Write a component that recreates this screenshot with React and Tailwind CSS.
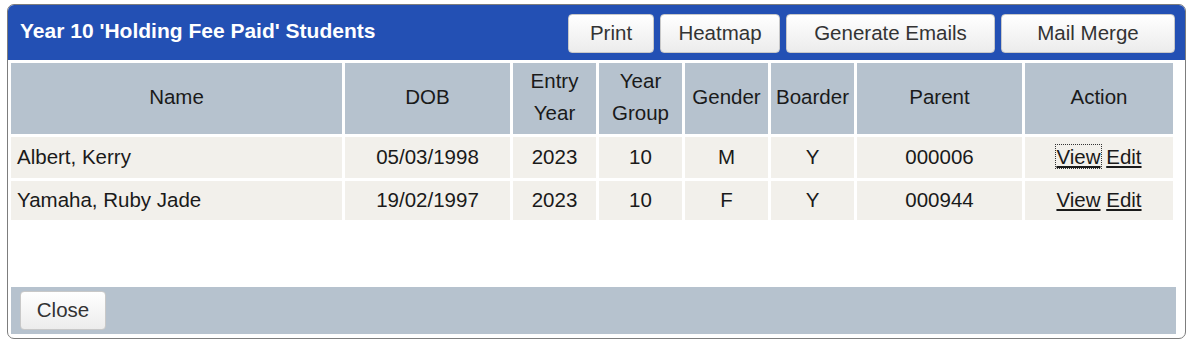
import React from 'react';

const students = [
  { name: 'Albert, Kerry', dob: '05/03/1998', entry: '2023', group: '10', gender: 'M', boarder: 'Y', parent: '000006', focus: true },
  { name: 'Yamaha, Ruby Jade', dob: '19/02/1997', entry: '2023', group: '10', gender: 'F', boarder: 'Y', parent: '000944' },
];

const btn =
  'h-[39px] rounded-[4px] border border-[#c8c8c8] bg-gradient-to-b from-white to-[#ececec] text-[20.5px] text-[#333] leading-none';

const App = () => {
  return (
    <div className="min-h-screen bg-white pt-[4px] pl-[7px] font-['Liberation_Sans',Arial,sans-serif]">
      <div className="w-[1179px] h-[335px] border border-[#7d7d7d] rounded-[7px] overflow-hidden bg-white flex flex-col">
        {/* Title bar */}
        <div className="h-[55px] bg-[#2350b4] flex items-center justify-between pl-[12px] pr-[10px] shrink-0">
          <h1 className="text-white font-bold text-[21px] -mt-[4px]">Year 10 'Holding Fee Paid' Students</h1>
          <div className="flex gap-[6px] mt-[2px]">
            <button className={`${btn} w-[86px]`}>Print</button>
            <button className={`${btn} w-[120px]`}>Heatmap</button>
            <button className={`${btn} w-[209px]`}>Generate Emails</button>
            <button className={`${btn} w-[174px]`}>Mail Merge</button>
          </div>
        </div>

        {/* Table */}
        <div className="grow">
          <table className="border-separate border-spacing-[3px] text-[20.5px] text-[#1a1a1a]">
            <thead>
              <tr className="bg-[#b6c2ce] h-[71px] leading-[32px]">
                <th className="font-normal pb-[3px] w-[331px]">Name</th>
                <th className="font-normal pb-[3px] w-[165px]">DOB</th>
                <th className="font-normal pb-[3px] w-[83px]">Entry<br />Year</th>
                <th className="font-normal pb-[3px] w-[83px]">Year<br />Group</th>
                <th className="font-normal pb-[3px] w-[83px]">Gender</th>
                <th className="font-normal pb-[3px] w-[83px]">Boarder</th>
                <th className="font-normal pb-[3px] w-[165px]">Parent</th>
                <th className="font-normal pb-[3px] w-[148px]">Action</th>
              </tr>
            </thead>
            <tbody>
              {students.map((s, i) => (
                <tr key={s.name} className={`bg-[#f2f0eb] ${i === 0 ? 'h-[41px]' : 'h-[39px]'}`}>
                  <td className="pl-[6px]">{s.name}</td>
                  <td className="text-center">{s.dob}</td>
                  <td className="text-center">{s.entry}</td>
                  <td className="text-center">{s.group}</td>
                  <td className="text-center">{s.gender}</td>
                  <td className="text-center">{s.boarder}</td>
                  <td className="text-center">{s.parent}</td>
                  <td className="text-center">
                    <a href="#" className={`underline ${s.focus ? 'outline-1 outline-dotted outline-[#333]' : ''}`}>View</a>{' '}
                    <a href="#" className="underline">Edit</a>
                  </td>
                </tr>
              ))}
            </tbody>
          </table>
        </div>

        {/* Footer */}
        <div className="mx-[3px] mb-[4px] w-[1165px] h-[47px] bg-[#b6c2ce] flex items-center pl-[9px] shrink-0">
          <button className={`${btn} w-[86px] h-[38px]`}>Close</button>
        </div>
      </div>
    </div>
  );
};

export default App;
